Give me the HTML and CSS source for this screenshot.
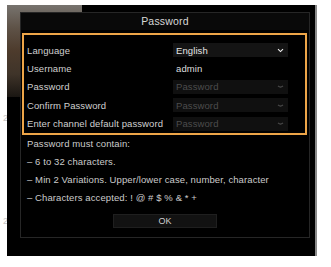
FILE: index.html
```html
<!DOCTYPE html>
<html lang="en">
<head>
    <meta charset="UTF-8">
    <meta name="viewport" content="width=device-width, initial-scale=1.0">
    <title>Password</title>
    <link rel="stylesheet" href="styles.css">
</head>
<body>
    <div class="page">
        <div class="edge">
            <span class="edge-mark">2</span>
            <span class="edge-mark">2</span>
        </div>
        <div class="screen">
            <div class="dialog">
                <div class="dialog-title">Password</div>
                <div class="fields">
                    <div class="row">
                        <span class="label">Language</span>
                        <div class="select">
                            <span>English</span>
                            <svg class="chevron" width="7" height="5" viewBox="0 0 7 5"><polyline points="1,1.2 3.5,3.6 6,1.2" fill="none" stroke="#f2f2f2" stroke-width="1.1"/></svg>
                        </div>
                    </div>
                    <div class="row">
                        <span class="label">Username</span>
                        <span class="value">admin</span>
                    </div>
                    <div class="row">
                        <span class="label">Password</span>
                        <div class="select disabled">
                            <span>Password</span>
                            <svg class="chevron" width="7" height="5" viewBox="0 0 7 5"><path d="M1 1.8 Q3.5 4.4 6 1.8" fill="none" stroke="#4a4a4a" stroke-width="1.1"/></svg>
                        </div>
                    </div>
                    <div class="row">
                        <span class="label">Confirm Password</span>
                        <div class="select disabled">
                            <span>Password</span>
                            <svg class="chevron" width="7" height="5" viewBox="0 0 7 5"><path d="M1 1.8 Q3.5 4.4 6 1.8" fill="none" stroke="#4a4a4a" stroke-width="1.1"/></svg>
                        </div>
                    </div>
                    <div class="row">
                        <span class="label">Enter channel default password</span>
                        <div class="select disabled">
                            <span>Password</span>
                            <svg class="chevron" width="7" height="5" viewBox="0 0 7 5"><path d="M1 1.8 Q3.5 4.4 6 1.8" fill="none" stroke="#4a4a4a" stroke-width="1.1"/></svg>
                        </div>
                    </div>
                </div>
                <div class="rules">
                    <p>Password must contain:</p>
                    <p>– 6 to 32 characters.</p>
                    <p>– Min 2 Variations. Upper/lower case, number, character</p>
                    <p>– Characters accepted: ! @ # $ % &amp; * +</p>
                </div>
                <div class="actions">
                    <button class="btn" type="button">OK</button>
                </div>
            </div>
        </div>
    </div>
</body>
</html>
```

FILE: styles.css
```css
/* Page */
body {
    margin: 0;
    background: #fff;
    font-family: "Liberation Sans", Arial, sans-serif;
}
.page {
    display: flex;
    align-items: flex-start;
}
/* Cut-off content left of the screen */
.edge {
    width: 7px;
    height: 267px;
    display: flex;
    flex-direction: column;
    padding-top: 113px;
    gap: 93px;
    box-sizing: border-box;
    overflow: visible;
}
.edge-mark {
    font-size: 9px;
    line-height: 10px;
    color: #c4c4c4;
    margin-left: 3px;
}
/* Black screen with the camera picture in the corner */
.screen {
    width: 310px;
    height: 251px;
    margin-top: 5px;
    padding: 7px 0 0 13px;
    box-sizing: border-box;
    background-color: #000;
    background-image: linear-gradient(180deg, #77736e 0%, #5e5247 25%, #4d3b2c 50%, #3f3429 75%, #1a1612 100%);
    background-size: 75px 92px;
    background-repeat: no-repeat;
    border-right: 2px solid #8a8a8a;
}
/* Dialog */
.dialog {
    width: 290px;
    height: 226px;
    box-sizing: border-box;
    border: 1px solid #262626;
    background: #000;
    display: flex;
    flex-direction: column;
}
.dialog-title {
    height: 17px;
    line-height: 16px;
    font-size: 10.5px;
    letter-spacing: 0.2px;
    text-align: center;
    color: #d8d8d8;
    background: #090909;
}
/* Highlighted fields */
.fields {
    width: 285px;
    height: 102px;
    margin: 3px 0 0 1px;
    padding: 6px 0 0 3px;
    box-sizing: border-box;
    border: 2px solid #eda548;
}
.row {
    display: grid;
    grid-template-columns: 146px 115px;
    align-items: center;
    height: 18.4px;
    font-size: 9.5px;
    letter-spacing: 0.1px;
    color: #d0d0d0;
}
.value {
    padding-left: 3px;
    color: #dedede;
}
.select {
    height: 14px;
    padding: 0 4px 0 3px;
    background: #141414;
    display: flex;
    align-items: center;
    justify-content: space-between;
    color: #e4e4e4;
}
.select.disabled {
    color: #4c4c4c;
    background: #101010;
}
/* Rules text */
.rules {
    padding-left: 6px;
    font-size: 9.5px;
    letter-spacing: 0.1px;
    line-height: 18px;
    color: #cbcbcb;
}
.rules p {
    margin: 0;
}
/* Button */
.actions {
    margin-top: auto;
    padding: 0 0 9px 92px;
}
.btn {
    display: block;
    width: 104px;
    height: 14px;
    padding: 0;
    background: #121212;
    border: 1px solid #1f1f1f;
    color: #cfcfcf;
    font-family: "Liberation Sans", Arial, sans-serif;
    font-size: 9px;
}
```
